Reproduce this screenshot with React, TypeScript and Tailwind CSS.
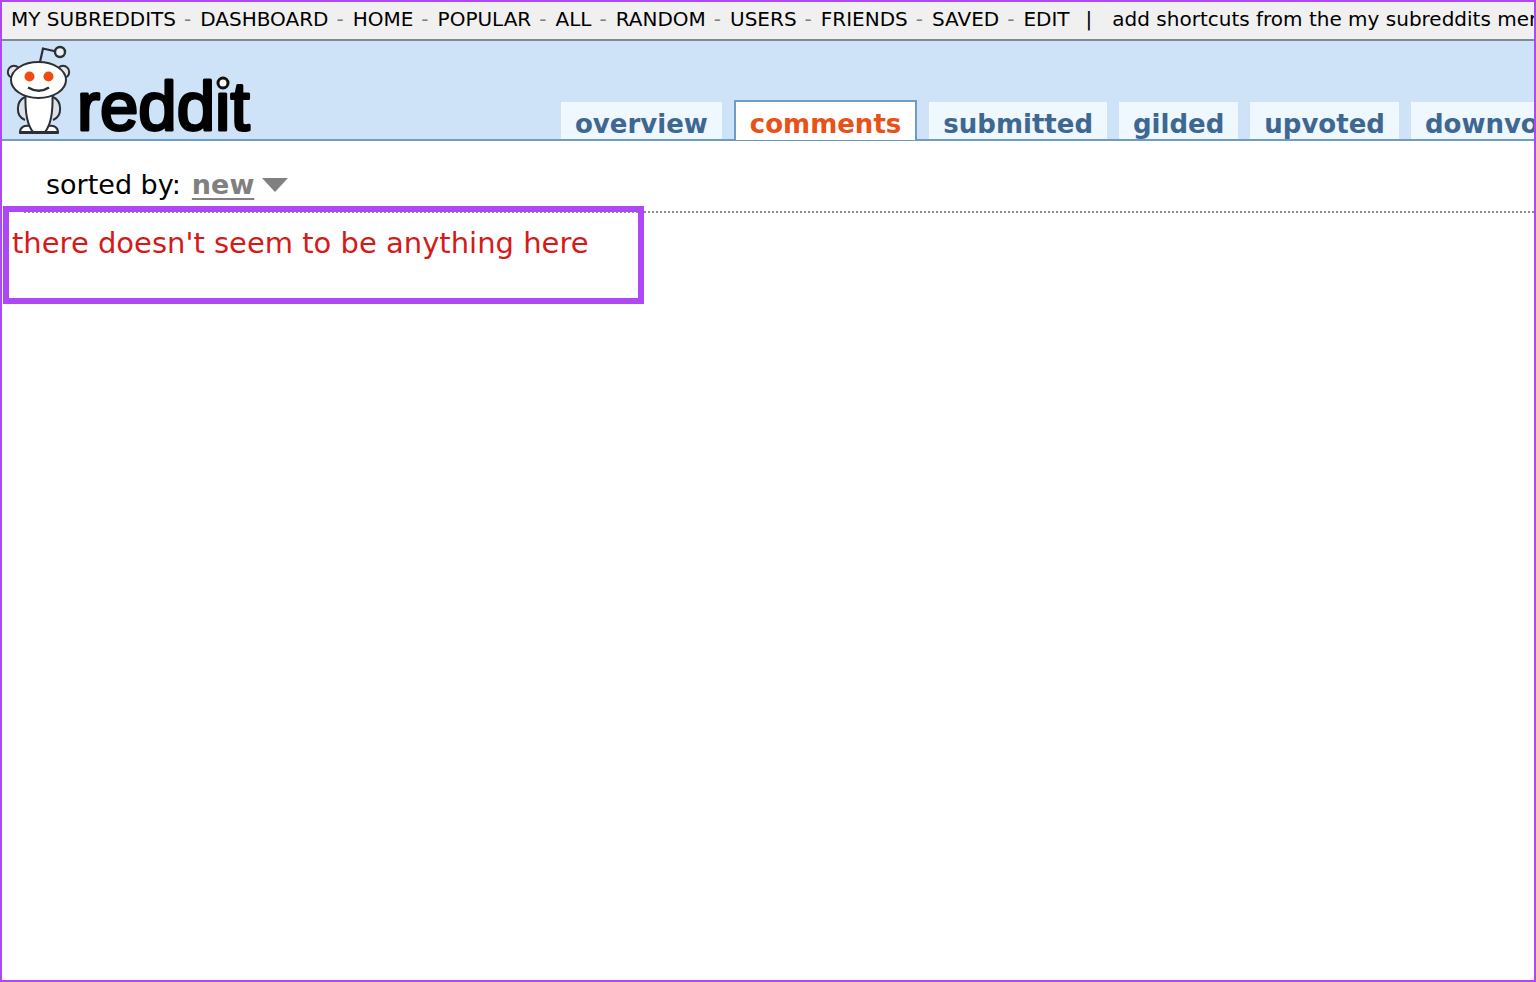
import { useState } from 'react'

const shortcuts = ['DASHBOARD', 'HOME', 'POPULAR', 'ALL', 'RANDOM', 'USERS', 'FRIENDS', 'SAVED', 'EDIT']

const tabs = ['overview', 'comments', 'submitted', 'gilded', 'upvoted', 'downvoted', 'hidden']

function Snoo() {
  return (
    <svg width="66" height="95" viewBox="0 0 66 95" fill="none" stroke="#2b3036" strokeWidth="2" aria-hidden="true">
      {/* antenna */}
      <path d="M34 18 L37 4.5 L50 7.5" strokeWidth="2.2" />
      <circle cx="54" cy="8" r="5" fill="#eef0f2" strokeWidth="2.4" />
      {/* ears */}
      <circle cx="8" cy="28" r="6.2" fill="#e4e6e8" />
      <circle cx="57" cy="28" r="6.2" fill="#e4e6e8" />
      {/* arms */}
      <path d="M19 53 C10 57 9 72 19 76" fill="#dde2e8" />
      <path d="M47 53 C56 57 57 72 47 76" fill="#dde2e8" />
      {/* feet */}
      <path d="M14 88.5 C14 83 18 81 24 82 L30 88.5 Z" fill="#fff" />
      <path d="M52 88.5 C52 83 48 81 42 82 L36 88.5 Z" fill="#fff" />
      {/* body */}
      <path d="M19.5 51 C19 68 22 82 27 88 L39 88 C44 82 47 68 46.5 51 Z" fill="#fff" />
      <path d="M13.5 88.5 H52.5" strokeWidth="3" />
      {/* head */}
      <ellipse cx="32.5" cy="36" rx="27.5" ry="18" fill="#fff" />
      <circle cx="23.5" cy="32.5" r="5" fill="#f04c12" stroke="none" />
      <circle cx="42.5" cy="32.5" r="5" fill="#f04c12" stroke="none" />
      <path d="M22 43.5 Q33 50 43 43.5" strokeWidth="2.4" />
    </svg>
  )
}

function Wordmark() {
  return (
    <svg width="190" height="70" viewBox="0 0 190 70" aria-label="reddit">
      <text
        x="5"
        y="61"
        fontFamily="'Liberation Sans', Arial, sans-serif"
        fontSize="69"
        fill="#000"
        stroke="#000"
        strokeWidth="3"
        strokeLinejoin="round"
      >
        reddit
      </text>
      {/* hollow dot of the i */}
      <rect x="146" y="6" width="11" height="15" fill="#cee3f8" />
      <circle cx="151" cy="14" r="5" fill="#fff" stroke="#111" strokeWidth="3" />
    </svg>
  )
}

export default function App() {
  const [active, setActive] = useState('comments')

  return (
    <div className="min-h-screen overflow-hidden border-2 border-[#ae48f5] bg-white font-['DejaVu_Sans',Verdana,sans-serif] text-black">
      <nav className="flex h-[39px] items-start overflow-hidden border-b-2 border-[#808890] bg-[#f0f0f0] pt-[3px] pl-[9px] text-[20px] leading-7 whitespace-nowrap">
        <button className="shrink-0">MY SUBREDDITS</button>
        {shortcuts.map((name) => (
          <span key={name} className="shrink-0">
            <span className="mr-[9px] ml-2 text-[#808080]">-</span>
            <a href="#">{name}</a>
          </span>
        ))}
        <span className="mr-5 ml-4 shrink-0">|</span>
        <a href="#" className="shrink-0">add shortcuts from the my subreddits menu</a>
      </nav>

      <header className="flex h-[100px] items-end border-b-2 border-[#6f9cc0] bg-[#cee3f8]">
        <a href="#" className="flex w-[559px] shrink-0 items-end pl-1">
          <Snoo />
          <Wordmark />
        </a>
        <div className="-mb-px flex items-end gap-3 text-[26px] leading-8 font-bold">
          {tabs.map((tab) => (
            <button
              key={tab}
              onClick={() => setActive(tab)}
              className={
                tab === active
                  ? 'h-10 shrink-0 border-2 border-b-0 border-[#6f9cc0] bg-white px-[14px] pt-[6px] text-[#e85218]'
                  : 'mb-px h-[37px] shrink-0 bg-[#eff7ff] px-[14px] pt-[6px] text-[#3e6891]'
              }
            >
              {tab}
            </button>
          ))}
        </div>
      </header>

      <main>
        <div className="ml-[22px] flex h-[72px] items-start border-b-2 border-dotted border-[#8c8c8c] pt-7 pl-[22px] text-[27px] leading-8">
          <span>sorted by:</span>
          <button className="ml-[11px] flex items-center gap-2 font-bold text-[#808080]">
            <span className="underline decoration-2 underline-offset-4">new</span>
            <svg width="26" height="14" viewBox="0 0 26 14" fill="#808080" aria-hidden="true">
              <path d="M0 0 H26 L13 14 Z" />
            </svg>
          </button>
        </div>
        <div className="relative">
          <p className="px-[10px] pt-3 text-[29px] leading-9 text-[#d51a1a]">there doesn't seem to be anything here</p>
          <div className="pointer-events-none absolute -top-[7px] left-px h-[98px] w-[641px] border-6 border-[#ae48f5]" />
        </div>
      </main>
    </div>
  )
}
